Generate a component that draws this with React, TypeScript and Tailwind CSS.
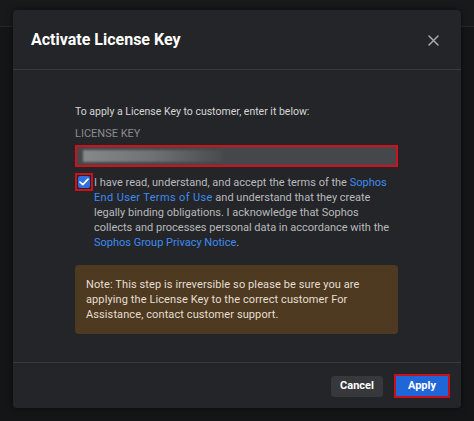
import React from "react";

export default function App() {
  return (
    <div
      className="relative w-[474px] h-[421px] overflow-hidden bg-[#141517]"
      style={{ fontFamily: "Roboto, 'Noto Sans', sans-serif" }}
    >
      <div className="absolute left-0 top-0 w-full h-[27px] bg-[#18191b] border-b border-[#26272a]" />
      <div className="absolute left-[13px] top-[10px] w-[448px] h-[398px] rounded-[4px] bg-[#242528] flex flex-col shadow-[0_0_6px_rgba(0,0,0,0.5)]">
        {/* header */}
        <div className="h-[60px] flex items-center justify-between pl-[18px] pr-[22px] border-b border-[#38393c] shrink-0">
          <div className="text-[16px] font-bold text-white mt-[1px]">Activate License Key</div>
          <svg width="11" height="11" viewBox="0 0 11 11" className="mt-[1px]">
            <path d="M1 1L10 10M10 1L1 10" stroke="#a9aaad" strokeWidth="1.5" strokeLinecap="round" />
          </svg>
        </div>
        {/* body */}
        <div className="flex-1 pl-[62px] pr-[63px] pt-[34px]">
          <div className="text-[10.5px] leading-[15px] text-[#d6d6d6]">
            To apply a License Key to customer, enter it below:
          </div>
          <div className="mt-[7px] text-[11px] leading-[15px] text-[#8b8c8f]">LICENSE KEY</div>
          <div className="mt-[4px] h-[22px] border-2 border-[#d0101a] bg-[#46474a] flex items-center px-[6px]">
            <div className="h-[12px] w-[140px] bg-gradient-to-r from-[#87888a] via-[#707174] to-[#4a4b4e] blur-[1px]" />
          </div>
          <div className="mt-[6px] flex">
            <div className="w-[18px] h-[18px] shrink-0 border-2 border-[#d0101a] flex items-center justify-center">
              <div className="w-[12px] h-[12px] rounded-[2px] bg-[#2f6fe0] flex items-center justify-center">
                <svg width="10" height="8" viewBox="0 0 10 8">
                  <path d="M1 4L3.8 6.6L9 1.2" stroke="white" strokeWidth="1.7" fill="none" strokeLinecap="round" strokeLinejoin="round" />
                </svg>
              </div>
            </div>
            <div className="pl-[1px] pt-[2px] text-[11px] leading-[15px] text-[#b9babc] whitespace-nowrap">
              I have read, understand, and accept the terms of the{" "}
              <span className="text-[#3d8bf0]">Sophos</span>
              <br />
              <span className="text-[#3d8bf0] tracking-[0.35px]">End User Terms of Use</span> and understand that they create
              <br />
              legally binding obligations. I acknowledge that Sophos
              <br />
              collects and processes personal data in accordance with the
              <br />
              <span className="text-[#3d8bf0]">Sophos Group Privacy Notice</span>.
            </div>
          </div>
          <div className="mt-[15px] rounded-[4px] bg-[#4d3a21] pl-[11px] pr-[10px] pt-[12px] pb-[12px] text-[11px] leading-[15px] tracking-[0.1px] text-[#e6dfd3] whitespace-nowrap">
            Note: This step is irreversible so please be sure you are
            <br />
            applying the License Key to the correct customer For
            <br />
            Assistance, contact customer support.
          </div>
        </div>
        {/* footer */}
        <div className="h-[46px] shrink-0 border-t border-[#38393c] flex items-center justify-end pr-[11px] gap-[11px] pt-[1px]">
          <div className="h-[21px] w-[52px] rounded-[3px] bg-[#37383b] flex items-center justify-center text-[11px] font-bold text-white">
            Cancel
          </div>
          <div className="h-[24px] w-[56px] border-2 border-[#c8101a] bg-[#1f66d8] flex items-center justify-center text-[11px] font-bold text-white">
            Apply
          </div>
        </div>
      </div>
    </div>
  );
}
